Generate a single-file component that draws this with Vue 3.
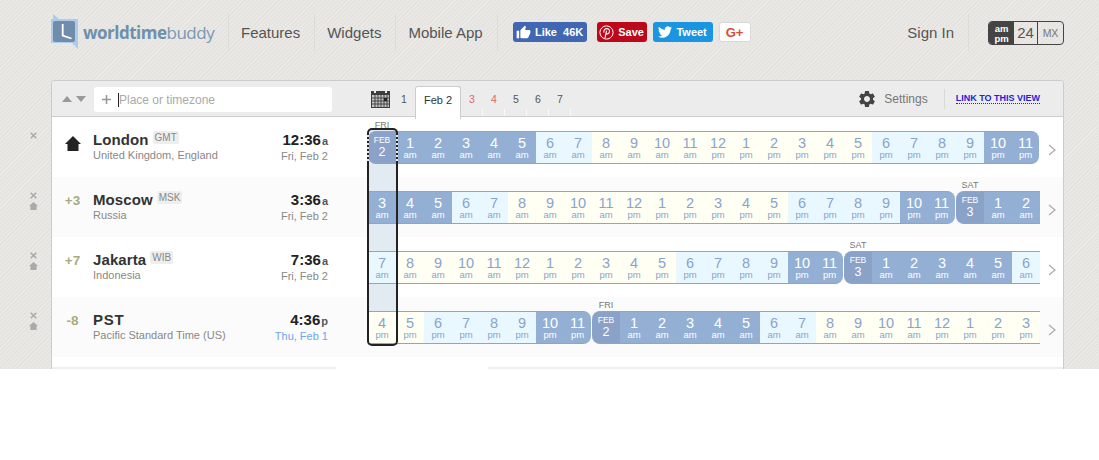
<script setup>
const nights = (h) => h < 6 || h >= 22
const dawn = (h) => (h >= 6 && h < 8) || (h >= 18 && h < 22)
function cells(start, nextMonthDay, label) {
  const out = []
  for (let i = 0; i < 24; i++) {
    const h = (start + i) % 24
    const kind = nights(h) ? 'night' : dawn(h) ? 'dawn' : 'day'
    const c = { h, kind, num: h % 12 === 0 ? 12 : h % 12, unit: h < 12 ? 'am' : 'pm' }
    if (h === 0) {
      c.midnight = true
      c.month = 'FEB'
      c.date = nextMonthDay
      c.label = label
    }
    if (h === 23) c.last = true
    out.push(c)
  }
  return out
}
const rows = [
  { offset: '', home: true, name: 'London', abbr: 'GMT', place: 'United Kingdom, England', time: '12:36', ap: 'a', date: 'Fri, Feb 2', cells: cells(0, 2, 'FRI') },
  { offset: '+3', name: 'Moscow', abbr: 'MSK', place: 'Russia', time: '3:36', ap: 'a', date: 'Fri, Feb 2', cells: cells(3, 3, 'SAT') },
  { offset: '+7', name: 'Jakarta', abbr: 'WIB', place: 'Indonesia', time: '7:36', ap: 'a', date: 'Fri, Feb 2', cells: cells(7, 3, 'SAT') },
  { offset: '-8', name: 'PST', wide: true, abbr: '', place: 'Pacific Standard Time (US)', time: '4:36', ap: 'p', date: 'Thu, Feb 1', prev: true, cells: cells(16, 2, 'FRI') }
]
const nav = ['Features', 'Widgets', 'Mobile App']
const days = [
  { t: '1' }, { t: 'Feb 2', active: true }, { t: '3', red: true }, { t: '4', red: true }, { t: '5' }, { t: '6' }, { t: '7' }
]
</script>

<template>
  <div class="page">
    <header class="header">
      <a class="logo">
        <svg class="logo-icon" width="28" height="36" viewBox="0 0 28 36">
          <path d="M2 0 L8 5 H27 V35 L21 29 H0 V5 H2 Z" fill="#a9cdea" />
          <rect x="2" y="7" width="22" height="21" rx="2" fill="#6f8dab" />
          <path d="M11.7 10 V21.5 L20.5 24.5" fill="none" stroke="#fff" stroke-width="1.8" />
        </svg>
        <span class="word"><b>worldtime</b>buddy</span>
      </a>
      <nav class="nav">
        <a v-for="n in nav" :key="n" class="nav-item">{{ n }}</a>
      </nav>
      <div class="social">
        <span class="btn fb">
          <svg width="15" height="15" viewBox="0 0 24 24"><path fill="#fff" d="M1 21h4V9H1v12zm22-11c0-1.1-.9-2-2-2h-6.31l.95-4.57.03-.32c0-.41-.17-.79-.44-1.06L14.17 1 7.59 7.59C7.22 7.95 7 8.45 7 9v10c0 1.1.9 2 2 2h9c.83 0 1.54-.5 1.84-1.22l3.02-7.05c.09-.23.14-.47.14-.73v-2z"/></svg>
          <span>Like&nbsp; 46K</span>
        </span>
        <span class="btn pin">
          <svg width="15" height="15" viewBox="0 0 15 15"><circle cx="7.5" cy="7.5" r="6.6" fill="none" stroke="#fff" stroke-width="1"/><path d="M6 13 L7.6 5.6 M5 7.6 C4.4 5.2 6 3.6 7.8 3.6 C9.8 3.6 10.8 5 10.4 6.8 C10 8.8 8.2 9.6 6.9 8.4" fill="none" stroke="#fff" stroke-width="1.1"/></svg>
          <span>Save</span>
        </span>
        <span class="btn tw">
          <svg width="14" height="14" viewBox="0 0 24 24"><path fill="#fff" d="M23.953 4.57a10 10 0 01-2.825.775 4.958 4.958 0 002.163-2.723c-.951.555-2.005.959-3.127 1.184a4.92 4.92 0 00-8.384 4.482C7.69 8.095 4.067 6.13 1.64 3.162a4.822 4.822 0 00-.666 2.475c0 1.71.87 3.213 2.188 4.096a4.904 4.904 0 01-2.228-.616v.06a4.923 4.923 0 003.946 4.827 4.996 4.996 0 01-2.212.085 4.936 4.936 0 004.604 3.417 9.867 9.867 0 01-6.102 2.105c-.39 0-.779-.023-1.17-.067a13.995 13.995 0 007.557 2.209c9.053 0 13.998-7.496 13.998-13.985 0-.21 0-.42-.015-.63A9.935 9.935 0 0024 4.59z"/></svg>
          <span>Tweet</span>
        </span>
        <span class="btn gp">G+</span>
      </div>
      <div class="right">
        <a class="signin">Sign In</a>
        <div class="fmt">
          <span class="fmt-a">am<br />pm</span>
          <span class="fmt-b">24</span>
          <span class="fmt-c">MX</span>
        </div>
      </div>
    </header>

    <div class="board">
      <aside class="gutter">
        <div v-for="(r, i) in rows" :key="r.name" class="act">
          <svg class="x" width="7" height="7" viewBox="0 0 7 7"><path d="M0.7 0.7 L6.3 6.3 M6.3 0.7 L0.7 6.3" stroke="#aaa" stroke-width="1.5"/></svg>
          <svg v-if="i > 0" class="mini-home" width="9" height="8" viewBox="0 0 9 8"><path d="M4.5 0 L9 4 H7.6 V8 H1.4 V4 H0 Z" fill="#aaa"/></svg>
        </div>
      </aside>

      <main class="panel">
        <div class="toolbar">
          <div class="arrows">
            <svg width="24" height="7" viewBox="0 0 24 7"><path d="M0 6 L5 0 L10 6 Z M14 0 H24 L19 6 Z" fill="#999"/></svg>
          </div>
          <div class="search">
            <svg width="9" height="9" viewBox="0 0 9 9"><path d="M4.5 0 V9 M0 4.5 H9" stroke="#999" stroke-width="1.6"/></svg>
            <i class="caret"></i>
            <span class="ph">Place or timezone</span>
          </div>
          <svg class="cal" width="19" height="17" viewBox="0 0 19 17">
            <rect x="0" y="0" width="19" height="17" fill="#3d3d3d"/>
            <rect x="1" y="4" width="17" height="12" fill="#c4c4c4"/>
            <path d="M1 7 H18 M1 10 H18 M1 13 H18 M4 4 V16 M7 4 V16 M10 4 V16 M13 4 V16 M16 4 V16" stroke="#444" stroke-width="1"/>
            <rect x="13" y="7" width="3" height="3" fill="#222"/>
            <rect x="3" y="0" width="2" height="2" fill="#ececec"/><rect x="14" y="0" width="2" height="2" fill="#ececec"/>
          </svg>
          <div class="days">
            <span v-for="d in days" :key="d.t" class="day" :class="{ active: d.active, red: d.red }">{{ d.t }}</span>
          </div>
          <div class="tools">
            <svg width="20" height="20" viewBox="0 0 24 24"><path fill="#444" d="M19.14 12.94c.04-.3.06-.61.06-.94 0-.32-.02-.64-.07-.94l2.03-1.58a.49.49 0 0 0 .12-.61l-1.92-3.32a.488.488 0 0 0-.59-.22l-2.39.96c-.5-.38-1.03-.7-1.62-.94l-.36-2.54a.484.484 0 0 0-.48-.41h-3.84c-.24 0-.43.17-.47.41l-.36 2.54c-.59.24-1.13.57-1.62.94l-2.39-.96c-.22-.08-.47 0-.59.22L2.74 8.87c-.12.21-.08.47.12.61l2.03 1.58c-.05.3-.09.63-.09.94s.02.64.07.94l-2.03 1.58a.49.49 0 0 0-.12.61l1.92 3.32c.12.22.37.29.59.22l2.39-.96c.5.38 1.03.7 1.62.94l.36 2.54c.05.24.24.41.48.41h3.84c.24 0 .44-.17.47-.41l.36-2.54c.59-.24 1.13-.56 1.62-.94l2.39.96c.22.08.47 0 .59-.22l1.92-3.32c.12-.22.07-.47-.12-.61l-2.01-1.58zM12 15.6c-1.98 0-3.6-1.62-3.6-3.6s1.62-3.6 3.6-3.6 3.6 1.62 3.6 3.6-1.62 3.6-3.6 3.6z"/></svg>
            <span class="settings">Settings</span>
            <a class="link">LINK TO THIS VIEW</a>
          </div>
        </div>

        <div class="rows">
          <div class="col-fill"></div>
          <div v-for="r in rows" :key="r.name" class="row">
            <div class="off">
              <svg v-if="r.home" class="home" width="16" height="15" viewBox="0 0 16 15"><path d="M8 0 L16 8 H13.5 V15 H2.5 V8 H0 Z" fill="#222"/></svg>
              <span v-else>{{ r.offset }}</span>
            </div>
            <div class="place">
              <div class="name-line">
                <span class="name" :class="{ wide: r.wide }">{{ r.name }}</span>
                <span v-if="r.abbr" class="abbr">{{ r.abbr }}</span>
              </div>
              <div class="sub">{{ r.place }}</div>
            </div>
            <div class="time">
              <div class="clock">{{ r.time }}<small>{{ r.ap }}</small></div>
              <div class="date" :class="{ prev: r.prev }">{{ r.date }}</div>
            </div>
            <div class="bar">
              <div
                v-for="(c, i) in r.cells"
                :key="i"
                class="cell"
                :class="[c.kind, { midnight: c.midnight, last: c.last }]"
              >
                <span v-if="c.midnight" class="wk">{{ c.label }}</span>
                <template v-if="c.midnight">
                  <span class="mon">{{ c.month }}</span>
                  <span class="dt">{{ c.date }}</span>
                </template>
                <template v-else>
                  <span class="num">{{ c.num }}</span>
                  <span class="unit">{{ c.unit }}</span>
                </template>
              </div>
            </div>
            <div class="chev">
              <svg width="8" height="12" viewBox="0 0 8 12"><path d="M1 1 L7 6 L1 11" fill="none" stroke="#aaa" stroke-width="1.2"/></svg>
            </div>
          </div>
          <div class="frame">
            <i class="dots dl"></i><i class="dots dr"></i>
          </div>
        </div>
        <div class="foot"><i></i><i></i></div>
      </main>
    </div>
  </div>
</template>

<style>
html, body { margin: 0; background: #fff; }
</style>

<style scoped>
* { box-sizing: border-box; }
.page {
  width: 1099px;
  height: 369px;
  overflow: hidden;
  font-family: "Liberation Sans", Arial, sans-serif;
  background: repeating-linear-gradient(135deg, #eae9e5 0, #eae9e5 1.5px, #e4e3df 1.5px, #e4e3df 3px);
}
.header {
  display: flex;
  height: 80px;
  padding: 14px 35px 0 51px;
}
.logo { display: flex; width: 177px; height: 37px; align-items: center; gap: 4px; }
.logo-icon { flex: none; margin-top: -1px; }
.word { font-family: "Open Sans", sans-serif; font-size: 17px; color: #7997b4; letter-spacing: -0.5px; white-space: nowrap; }
.word b { color: #6f8fad; font-weight: 700; }
.nav { display: flex; height: 37px; border-right: 1px solid #dcdbd7; }
.nav-item {
  border-left: 1px solid #dcdbd7;
  padding: 0 14px 0 12px;
  line-height: 37px;
  font-size: 15px;
  color: #555;
}
.social { display: flex; gap: 6px; margin: 8px 0 0 15px; height: 20px; }
.btn {
  display: flex;
  align-items: center;
  justify-content: center;
  gap: 4px;
  height: 20px;
  border-radius: 3px;
  color: #fff;
  font-size: 11px;
  font-weight: 700;
}
.fb { width: 74px; background: #4267b2; margin-right: 4px; }
.pin { width: 50px; background: #bd081c; }
.tw { width: 60px; background: #1b95e0; }
.gp { width: 32px; background: #fff; border: 1px solid #d8d8d8; color: #dd4b39; font-size: 13px; }
.right { display: flex; margin-left: auto; height: 37px; }
.signin {
  padding-right: 14px;
  border-right: 1px solid #dcdbd7;
  line-height: 37px;
  font-size: 15px;
  color: #555;
}
.fmt {
  display: flex;
  align-self: flex-start;
  width: 76px;
  height: 24px;
  margin: 7px 0 0 19px;
  border: 1px solid #444;
  border-radius: 4px;
  overflow: hidden;
  text-align: center;
  color: #555;
}
.fmt-a { width: 25px; background: #444; color: #fff; font-size: 9.5px; font-weight: 700; line-height: 10px; padding-top: 2px; }
.fmt-b { width: 24px; border-right: 1px solid #444; font-size: 15px; line-height: 22px; }
.fmt-c { flex: 1; font-size: 10.5px; line-height: 22px; color: #777; }

.board { display: flex; }
.gutter { width: 51px; padding-top: 37px; }
.act { height: 60px; padding-top: 15px; display: flex; flex-direction: column; align-items: center; padding-left: 15px; width: 51px; }
.x { display: block; }
.mini-home { margin-top: 3px; }

.panel {
  width: 1013px;
  height: 289px;
  border: 1px solid #ccc;
  border-bottom: 0;
  border-radius: 4px 4px 0 0;
  background: #fff;
}
.toolbar {
  display: flex;
  align-items: center;
  height: 36px;
  background: #ececec;
  border-bottom: 1px solid #ccc;
  border-radius: 3px 3px 0 0;
}
.arrows { width: 42px; padding: 2px 0 0 10px; line-height: 0; }
.search {
  display: flex;
  align-items: center;
  gap: 7px;
  width: 238px;
  height: 25px;
  margin-top: 1px;
  padding: 1px 0 0 8px;
  background: #fff;
  border-radius: 3px;
}
.caret { width: 1px; height: 14px; background: #222; margin-right: -7px; }
.ph { font-size: 12px; color: #aaa; }
.cal { margin: 1px 0 0 39px; flex: none; }
.days { display: flex; align-self: stretch; margin-left: 3px; }
.day {
  position: relative;
  width: 22px;
  text-align: center;
  font-size: 10.5px;
  line-height: 36px;
  color: #555;
}
.day.red { color: #e06666; }
.day.active {
  width: 46px;
  height: 33px;
  margin-top: 5px;
  line-height: 26px;
  font-size: 11px;
  color: #333;
  background: #fff;
  border: 1px solid #ccc;
  border-bottom: 0;
  border-radius: 3px 3px 0 0;
}
.day:not(.active):not(:first-child)::after {
  content: "";
  position: absolute;
  right: 0;
  bottom: 0;
  height: 7px;
  width: 1px;
  background: #fafafa;
}
.tools { display: flex; align-items: center; margin-left: auto; padding-right: 23px; }
.settings { margin-left: 7px; font-size: 12px; color: #777; padding-right: 16px; border-right: 1px solid #d8d8d8; line-height: 20px; }
.link {
  margin-left: 11px;
  font-size: 9px;
  font-weight: 700;
  color: #2222dd;
  border-bottom: 1px dotted #2222dd;
  line-height: 10px;
  white-space: nowrap;
}

.rows { position: relative; }
.col-fill {
  position: absolute;
  left: 316px;
  top: 12px;
  width: 30px;
  height: 216px;
  background: #e2eaf2;
  z-index: 1;
}
.row { display: flex; height: 60px; padding-top: 14px; }
.row:nth-child(3), .row:nth-child(5) { background: #fbfbfb; }
.off { width: 41px; padding-top: 1px; text-align: center; font-size: 13.5px; font-weight: 700; line-height: 18px; color: #a9ab7d; }
.home { margin-top: 4px; }
.place { width: 175px; }
.name-line { display: flex; align-items: flex-start; height: 18px; gap: 4px; }
.name { font-size: 15px; font-weight: 700; line-height: 18px; color: #333; letter-spacing: 0.1px; }
.name.wide { letter-spacing: 0.8px; }
.abbr {
  padding: 0 2px;
  height: 13px;
  font-size: 10px;
  line-height: 13px;
  color: #888;
  background: #eee;
  border-radius: 2px;
}
.sub, .date { font-size: 11px; line-height: 13px; color: #888; }
.time { width: 60px; text-align: right; white-space: nowrap; }
.clock { font-size: 15px; font-weight: 700; line-height: 18px; color: #222; display: flex; justify-content: flex-end; align-items: baseline; }
.clock small { font-size: 11px; margin-left: 1px; color: #555; }
.date.prev { color: #6ea5f0; }
.bar {
  display: flex;
  position: relative;
  z-index: 2;
  margin-left: 40px;
  width: 672px;
  height: 33px;
}
.cell {
  position: relative;
  display: flex;
  flex-direction: column;
  align-items: center;
  width: 28px;
  height: 33px;
  padding-top: 4px;
  border-top: 1px solid #8aa6cf;
  border-bottom: 1px solid #8aa6cf;
  color: #8aa3cc;
}
.night { background: #93b0d4; color: #fff; }
.dawn { background: #e9f8ff; }
.cell.day { background: #fffff3; }
.cell.midnight { background: #8aa2c8; color: #fff; border-radius: 8px 0 0 8px; padding-top: 3px; }
.cell.last { border-radius: 0 8px 8px 0; width: 27px; margin-right: 1px; }
.num { font-size: 14.5px; line-height: 14px; }
.unit { font-size: 9.5px; line-height: 9px; }
.mon { font-size: 8.5px; line-height: 11px; }
.dt { font-size: 12.5px; line-height: 12px; }
.wk { position: absolute; bottom: 100%; left: -6px; right: -6px; text-align: center; font-size: 9px; line-height: 11px; color: #777; margin-bottom: 1px; }
.chev { width: 22px; padding: 11px 0 0 8px; }
.frame {
  position: absolute;
  left: 315px;
  top: 11px;
  width: 31px;
  height: 218px;
  border: 2px solid #222;
  border-radius: 5px;
  z-index: 3;
}
.dots {
  position: absolute;
  top: 3px;
  height: 28px;
  width: 2px;
  background: repeating-linear-gradient(180deg, #222 0, #222 2px, #e8e8e8 2px, #e8e8e8 4px);
}
.dl { left: -2px; }
.dr { right: -2px; }
.foot { display: flex; justify-content: space-between; margin-top: 10px; }
.foot i { height: 2px; background: #eee; }
.foot i:first-child { width: 284px; }
.foot i:last-child { width: 575px; }
</style>
